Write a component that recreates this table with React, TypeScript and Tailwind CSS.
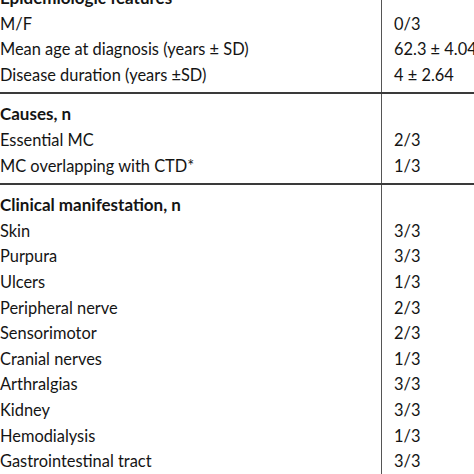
const sections: { title: string; rows: [string, string][] }[] = [
  {
    title: 'Epidemiologic features',
    rows: [
      ['M/F', '0/3'],
      ['Mean age at diagnosis (years ± SD)', '62.3 ± 4.04'],
      ['Disease duration (years ±SD)', '4 ± 2.64'],
    ],
  },
  {
    title: 'Causes, n',
    rows: [
      ['Essential MC', '2/3'],
      ['MC overlapping with CTD*', '1/3'],
    ],
  },
  {
    title: 'Clinical manifestation, n',
    rows: [
      ['Skin', '3/3'],
      ['Purpura', '3/3'],
      ['Ulcers', '1/3'],
      ['Peripheral nerve', '2/3'],
      ['Sensorimotor', '2/3'],
      ['Cranial nerves', '1/3'],
      ['Arthralgias', '3/3'],
      ['Kidney', '3/3'],
      ['Hemodialysis', '1/3'],
      ['Gastrointestinal tract', '3/3'],
    ],
  },
]

export default function App() {
  return (
    <div className="w-[474px] h-[474px] overflow-hidden bg-white text-[#141414] font-['Lato',sans-serif] text-[16.4px]">
      <div className="-mt-[15px]">
        {sections.map((s, i) => (
          <div
            key={s.title}
            className={`grid grid-cols-[381px_1fr] ${i > 0 ? 'border-t-2 border-[#3a3a3a]' : ''}`}
          >
            <div className={`${i > 0 ? 'pt-[7px]' : ''} pb-[5px]`}>
              <div className="h-[25.6px] leading-[25.6px] font-bold text-[17px] whitespace-nowrap">{s.title}</div>
              {s.rows.map(([label]) => (
                <div key={label} className="h-[25.6px] leading-[25.6px] whitespace-nowrap">
                  {label}
                </div>
              ))}
            </div>
            <div className={`border-l-[1.5px] border-[#555] pl-[12px] ${i > 0 ? 'pt-[7px]' : ''} pb-[5px]`}>
              <div className="h-[25.6px]" />
              {s.rows.map(([label, value]) => (
                <div key={label} className="h-[25.6px] leading-[25.6px] whitespace-nowrap">
                  {value}
                </div>
              ))}
            </div>
          </div>
        ))}
      </div>
    </div>
  )
}
